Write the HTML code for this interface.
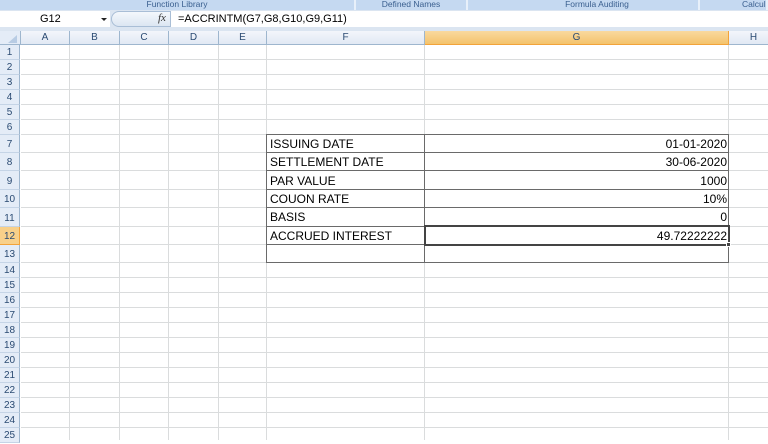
<!DOCTYPE html>
<html><head><meta charset="utf-8"><style>
*{margin:0;padding:0;box-sizing:border-box}
body{width:768px;height:440px;overflow:hidden;background:#fff;font-family:"Liberation Sans",sans-serif;position:relative}
.a{position:absolute}
.hl{position:absolute;height:1px;background:#dadcdd}
.vl{position:absolute;width:1px;background:#dadcdd}
.rh{position:absolute;left:0;width:20px;font-size:10px;color:#2a4a72;text-align:center;background:#e4ecf7;border-bottom:1px solid #c5d4e6;border-right:1px solid #9eb6ce}
.ch{position:absolute;top:31px;height:14px;font-size:10px;color:#2a4a72;text-align:center;line-height:14px;background:linear-gradient(#f3f6fb,#e1e9f4);border-right:1px solid #9eb6ce;border-bottom:1px solid #9eb6ce}
.c{position:absolute;font-size:12px;color:#000;white-space:nowrap}
.tl{position:absolute;background:#6a6a6a}
.rib{position:absolute;top:0;height:10px;font-size:8.5px;color:#3a5f8f;text-align:center;line-height:9px;background:#c5d9f1;border-right:2px solid #e8f0fa;overflow:hidden}
</style></head><body>
<div class="a" style="left:0;top:0;width:768px;height:10px;background:#c5d9f1"></div>
<div class="rib" style="left:0;width:356px">Function Library</div>
<div class="rib" style="left:356px;width:112px">Defined Names</div>
<div class="rib" style="left:496px;width:204px">Formula Auditing</div>
<div class="rib" style="left:702px;width:66px;text-align:left;padding-left:40px">Calcula</div>
<div class="a" style="left:468px;top:0;width:28px;height:10px;background:#c5d9f1"></div>
<div class="a" style="left:0;top:10px;width:768px;height:21px;background:#dbe5f1"></div>
<div class="a" style="left:0;top:11px;width:110px;height:16px;background:#fff"></div>
<div class="a" style="left:40px;top:13px;font-size:11px">G12</div>
<div class="a" style="left:101px;top:18px;width:0;height:0;border-left:3px solid transparent;border-right:3px solid transparent;border-top:3px solid #222"></div>
<div class="a" style="left:111px;top:11px;width:60px;height:16px;border-radius:8px 0 0 8px;background:linear-gradient(#f4f8fc,#dce6f2);border:1px solid #a9bed6"></div>
<div class="a" style="left:158px;top:12px;font-size:11px;font-style:italic;font-family:'Liberation Serif',serif;color:#333">fx</div>
<div class="a" style="left:171px;top:11px;width:597px;height:16px;background:#fff"></div>
<div class="a" style="left:178px;top:13px;font-size:11px">=ACCRINTM(G7,G8,G10,G9,G11)</div>
<div class="a" style="left:0;top:31px;width:21px;height:14px;background:#e4ecf7;border-right:1px solid #9eb6ce;border-bottom:1px solid #9eb6ce"></div>
<div class="a" style="left:8px;top:35px;width:0;height:0;border-left:9px solid transparent;border-bottom:8px solid #b8cce4"></div>
<div class="ch" style="left:21px;width:49px">A</div>
<div class="ch" style="left:70px;width:50px">B</div>
<div class="ch" style="left:120px;width:49px">C</div>
<div class="ch" style="left:169px;width:50px">D</div>
<div class="ch" style="left:219px;width:48px">E</div>
<div class="ch" style="left:267px;width:158px">F</div>
<div class="ch" style="left:425px;width:304px;background:linear-gradient(#f9d99f,#f4c36c);border-color:#f2a33a">G</div>
<div class="ch" style="left:729px;width:50px">H</div>
<div class="rh" style="top:45px;height:15px;line-height:15px">1</div>
<div class="rh" style="top:60px;height:15px;line-height:15px">2</div>
<div class="rh" style="top:75px;height:15px;line-height:15px">3</div>
<div class="rh" style="top:90px;height:15px;line-height:15px">4</div>
<div class="rh" style="top:105px;height:15px;line-height:15px">5</div>
<div class="rh" style="top:120px;height:15px;line-height:15px">6</div>
<div class="rh" style="top:135px;height:18px;line-height:20px">7</div>
<div class="rh" style="top:153px;height:18px;line-height:20px">8</div>
<div class="rh" style="top:171px;height:19px;line-height:21px">9</div>
<div class="rh" style="top:190px;height:18px;line-height:20px">10</div>
<div class="rh" style="top:208px;height:19px;line-height:21px">11</div>
<div class="rh" style="top:227px;height:18px;line-height:20px;background:#f8d08a;border-color:#f2a33a">12</div>
<div class="rh" style="top:245px;height:18px;line-height:20px">13</div>
<div class="rh" style="top:263px;height:15px;line-height:16px">14</div>
<div class="rh" style="top:278px;height:15px;line-height:16px">15</div>
<div class="rh" style="top:293px;height:15px;line-height:16px">16</div>
<div class="rh" style="top:308px;height:15px;line-height:16px">17</div>
<div class="rh" style="top:323px;height:15px;line-height:16px">18</div>
<div class="rh" style="top:338px;height:15px;line-height:16px">19</div>
<div class="rh" style="top:353px;height:15px;line-height:16px">20</div>
<div class="rh" style="top:368px;height:15px;line-height:16px">21</div>
<div class="rh" style="top:383px;height:15px;line-height:16px">22</div>
<div class="rh" style="top:398px;height:15px;line-height:16px">23</div>
<div class="rh" style="top:413px;height:15px;line-height:16px">24</div>
<div class="rh" style="top:428px;height:15px;line-height:16px">25</div>
<div class="hl" style="left:21px;width:747px;top:59px"></div>
<div class="hl" style="left:21px;width:747px;top:74px"></div>
<div class="hl" style="left:21px;width:747px;top:89px"></div>
<div class="hl" style="left:21px;width:747px;top:104px"></div>
<div class="hl" style="left:21px;width:747px;top:119px"></div>
<div class="hl" style="left:21px;width:747px;top:134px"></div>
<div class="hl" style="left:21px;width:747px;top:152px"></div>
<div class="hl" style="left:21px;width:747px;top:170px"></div>
<div class="hl" style="left:21px;width:747px;top:189px"></div>
<div class="hl" style="left:21px;width:747px;top:207px"></div>
<div class="hl" style="left:21px;width:747px;top:226px"></div>
<div class="hl" style="left:21px;width:747px;top:244px"></div>
<div class="hl" style="left:21px;width:747px;top:262px"></div>
<div class="hl" style="left:21px;width:747px;top:277px"></div>
<div class="hl" style="left:21px;width:747px;top:292px"></div>
<div class="hl" style="left:21px;width:747px;top:307px"></div>
<div class="hl" style="left:21px;width:747px;top:322px"></div>
<div class="hl" style="left:21px;width:747px;top:337px"></div>
<div class="hl" style="left:21px;width:747px;top:352px"></div>
<div class="hl" style="left:21px;width:747px;top:367px"></div>
<div class="hl" style="left:21px;width:747px;top:382px"></div>
<div class="hl" style="left:21px;width:747px;top:397px"></div>
<div class="hl" style="left:21px;width:747px;top:412px"></div>
<div class="hl" style="left:21px;width:747px;top:427px"></div>
<div class="vl" style="top:45px;height:395px;left:69px"></div>
<div class="vl" style="top:45px;height:395px;left:119px"></div>
<div class="vl" style="top:45px;height:395px;left:168px"></div>
<div class="vl" style="top:45px;height:395px;left:218px"></div>
<div class="vl" style="top:45px;height:395px;left:266px"></div>
<div class="vl" style="top:45px;height:395px;left:424px"></div>
<div class="vl" style="top:45px;height:395px;left:728px"></div>
<div class="tl" style="left:266px;top:134px;width:1px;height:129px"></div>
<div class="tl" style="left:424px;top:134px;width:1px;height:129px"></div>
<div class="tl" style="left:728px;top:134px;width:1px;height:129px"></div>
<div class="tl" style="left:266px;top:134px;width:463px;height:1px"></div>
<div class="tl" style="left:266px;top:152px;width:463px;height:1px"></div>
<div class="tl" style="left:266px;top:170px;width:463px;height:1px"></div>
<div class="tl" style="left:266px;top:189px;width:463px;height:1px"></div>
<div class="tl" style="left:266px;top:207px;width:463px;height:1px"></div>
<div class="tl" style="left:266px;top:226px;width:463px;height:1px"></div>
<div class="tl" style="left:266px;top:244px;width:463px;height:1px"></div>
<div class="tl" style="left:266px;top:262px;width:463px;height:1px"></div>
<div class="a" style="left:424px;top:225px;width:306px;height:21px;border:2px solid #444"></div>
<div class="a" style="left:726px;top:242px;width:5px;height:5px;background:#444;border:1px solid #fff"></div>
<div class="c" style="left:270px;top:137px">ISSUING DATE</div>
<div class="c" style="left:270px;top:155px">SETTLEMENT DATE</div>
<div class="c" style="left:270px;top:174px">PAR VALUE</div>
<div class="c" style="left:270px;top:192px">COUON RATE</div>
<div class="c" style="left:270px;top:210px">BASIS</div>
<div class="c" style="left:270px;top:229px">ACCRUED INTEREST</div>
<div class="c" style="right:41px;top:137px">01-01-2020</div>
<div class="c" style="right:41px;top:155px">30-06-2020</div>
<div class="c" style="right:41px;top:174px">1000</div>
<div class="c" style="right:41px;top:192px">10%</div>
<div class="c" style="right:41px;top:210px">0</div>
<div class="c" style="right:41px;top:229px">49.72222222</div>
</body></html>
